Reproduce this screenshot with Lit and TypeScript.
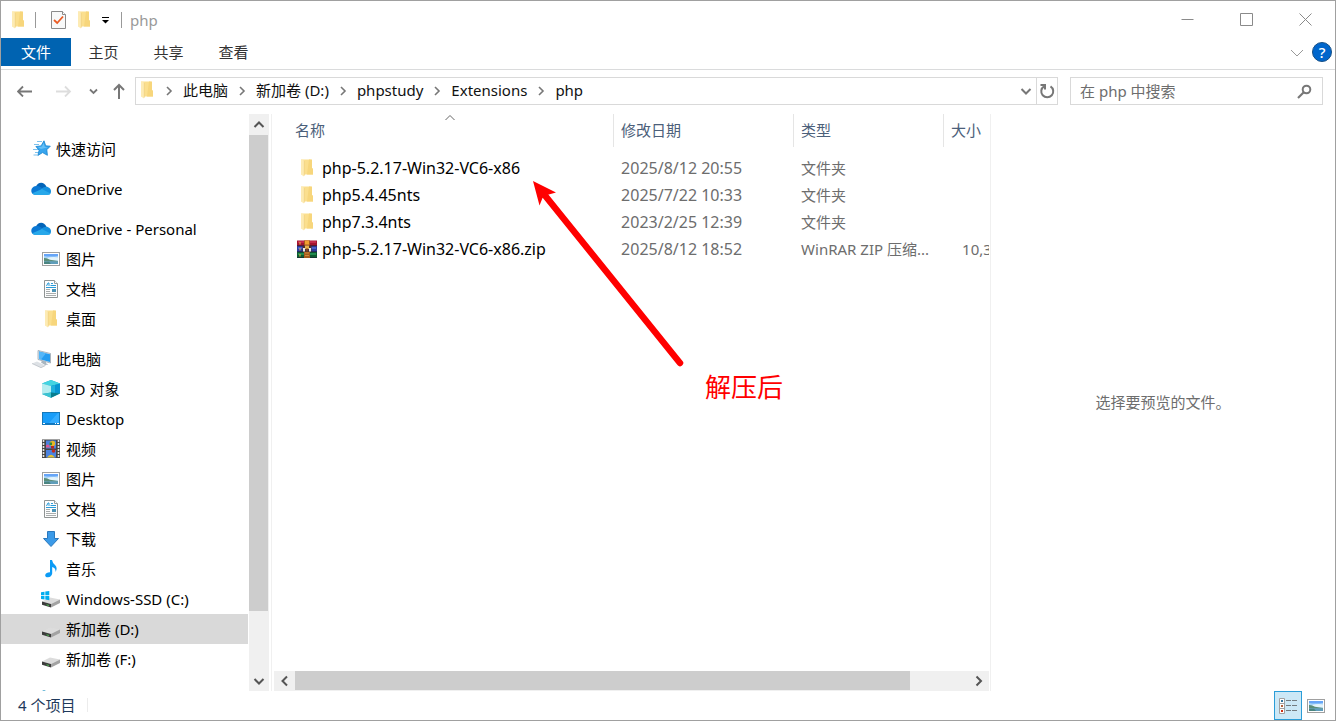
import { LitElement, html, css, svg, nothing } from "lit";
import { customElement, state } from "lit/decorators.js";

const folder = svg`<svg class="icon" width="12" height="18" viewBox="0 0 12 18" aria-hidden="true">
  <path d="M.500 .500H9Q11 .500 11 2V9L12 10V15.500H.500Z" fill="#fbdf8e"/>
  <path d="M8 .500H11V9L12 10V15.500H6Z" fill="#f7d67c"/>
  <path d="M0 0L3.500 2V15.800L3 17.500L0 15.600Z" fill="#fdebb4"/>
  <path d="M3.300 2V16.500" stroke="#edc870" stroke-width=".6"/></svg>`;

const picture = svg`<svg class="icon" width="20" height="20" viewBox="0 0 20 20" aria-hidden="true">
  <rect x="1.500" y="3.500" width="17" height="13" fill="#fff" stroke="#a0a0a0"/>
  <path d="M3 5H17V15H3Z" fill="#a6d4f8"/><path d="M3 5H17V7Q10 8 3 7Z" fill="#67a5f8"/>
  <path d="M6 9Q12 7.500 17 8.500V11.500H7Z" fill="#e3f3fb"/>
  <path d="M3 9Q6 8.800 9 10.800L17 12V12.800H3Z" fill="#5b8d78"/><path d="M3 12.500L11 12.200L17 12.800V15H3Z" fill="#5f9dbb"/><path d="M3 13L8 12.800L10 15H3Z" fill="#4b8580"/></svg>`;

const documentIcon = svg`<svg class="icon" width="20" height="20" viewBox="0 0 20 20" aria-hidden="true">
  <path d="M3.500 1.500H13.500L16.500 4.500V18.500H3.500Z" fill="#fdfdfd" stroke="#8f9494"/>
  <path d="M13.500 1.500V4.500H16.500" fill="#fff" stroke="#9aa0a0"/>
  <path d="M5.500 7L7 4H8V7M10 4.500H12M9.500 6.500H15M5 8.500H15" fill="none" stroke="#2b9bd8"/>
  <path d="M5 10.500H9M5 12.500H9M5 14.500H15M5 16.500H15" stroke="#a8acac"/><rect x="11" y="10" width="4" height="3" fill="#4a93b5"/></svg>`;

const cloud = svg`<svg class="icon" width="20" height="20" viewBox="0 0 20 20" aria-hidden="true">
  <path d="M5 7.500C6.500 3.200 13 2 15.500 7.800L11.500 11Z" fill="#0364b8"/>
  <path d="M5 7C8 6.500 9 7.800 14 11L3 15.500C-1.200 14-.5 7.500 5 7Z" fill="#0a78d4"/>
  <path d="M15 7.800C20.500 7.800 21.500 14.500 17.800 15.500L9.500 10.500Q12 8 15 7.800Z" fill="#1490df"/>
  <path d="M3 15.800Q1.500 15 1.300 14.300L11 9.900L19.500 14.400Q18.500 16 16.500 16H4Q3.400 16 3 15.800Z" fill="#28a8ea"/></svg>`;

const star = svg`<svg class="icon" width="20" height="20" viewBox="0 0 20 20" aria-hidden="true">
  <path d="M13 1.800L14.700 6.800L19.300 7.200L15.800 10.700L16.400 16.300L11.600 13.600L6.800 16.500L8.100 11.200L4.900 7.500L10.100 6.900Z" fill="#37a5ee" stroke="#1583ce" stroke-width=".8"/>
  <path d="M12.500 4L13.700 7.800L17 8.200L10 10L7 8.200L11 7.500Z" fill="#65c0f7"/>
  <path d="M6 2.500H11M3 5.500H8M2 10.500H7M4 13.500H7M2.500 16H6" stroke="#5ab1e8" stroke-width=".8"/></svg>`;

const computer = svg`<svg class="icon" width="20" height="20" viewBox="0 0 20 20" aria-hidden="true">
  <path d="M7 1.500L19.500 4.500V14L7 10.500Z" fill="#dce6ee" stroke="#8f9ba6" stroke-width=".7"/>
  <path d="M8 2.500L19 5.200V13L8 9.900Z" fill="#259cf0"/><path d="M8 2.500L15 4.200L10 10.400L8 9.900Z" fill="#54b6f8"/>
  <path d="M11 11.500L15 12.600V14.200L17.500 15.500L14 16L10 13.500Z" fill="#a9b5bf"/>
  <path d="M1 14.500L6 12.500L14.500 16.500L10 18.700Z" fill="#dde1e5"/><path d="M1 14.500L10 18.700L14.500 16.500" fill="none" stroke="#b4bac1" stroke-width=".7"/></svg>`;

const cube = svg`<svg class="icon" width="20" height="20" viewBox="0 0 20 20" aria-hidden="true">
  <path d="M10 1L19 4.500V14.500L10 18.800L1 15V4.500Z" fill="#19a5c2"/>
  <path d="M1 4.500L10 1L19 4.500L10 7Z" fill="#43d4e1"/><path d="M1 4.500L10 7V13.500L1 15Z" fill="#b5edf0"/>
  <path d="M10 7L19 4.500V14.500L10 13.500Z" fill="#0795d2"/><path d="M10 7L14 6V14L10 13.500Z" fill="#20b0dc"/>
  <path d="M1 15L10 13.500V18.800Z" fill="#3bc3d1"/><path d="M10 13.500L19 14.500L10 18.800Z" fill="#087d8e"/></svg>`;

const desktop = svg`<svg class="icon" width="20" height="20" viewBox="0 0 20 20" aria-hidden="true">
  <rect x="1.500" y="3.500" width="17" height="12" fill="#189df9" stroke="#1478ba"/><path d="M8 14L17 4H18V14Z" fill="#35adff"/>
  <path d="M2 14.500H18" stroke="#0c78c4"/><path d="M2 14.500H4M14 14.500H15M16 14.500H18" stroke="#fff"/></svg>`;

const film = svg`<svg class="icon" width="20" height="20" viewBox="0 0 20 20" aria-hidden="true">
  <path d="M1 .500H19V19H1Z" fill="#454545"/><path d="M2.500 1V19M17.500 1V19" stroke="#e4e4e4" stroke-width="1.600" stroke-dasharray="2 1"/>
  <path d="M5 1.500H15V9.500H5ZM5 11H15V18.500H5Z" fill="#4b82df"/>
  <circle cx="11.500" cy="4.500" r="2.700" fill="#e7b525"/><path d="M8.500 3.500H11V6H8.500Z" fill="#2c8a3e"/><path d="M5 6.500Q8 4 9 8.500H5Z" fill="#df5690"/>
  <path d="M10 7H13V9.500H10Z" fill="#b82920"/><circle cx="12.500" cy="12" r="1.800" fill="#c42a20"/><path d="M6 18.500Q10 13 14 18.500Z" fill="#e6c22e"/></svg>`;

const download = svg`<svg class="icon" width="20" height="20" viewBox="0 0 20 20" aria-hidden="true">
  <path d="M6.500 2.500H13.500V9.500H17.500L10 17.500L2.500 9.500H6.500Z" fill="#3b9ae8" stroke="#2a78bd"/></svg>`;

const music = svg`<svg class="icon" width="20" height="20" viewBox="0 0 20 20" aria-hidden="true">
  <path d="M9 1H11Q11.500 4 14 6Q17 9 14.500 13Q15 9 11.200 8V14.500Q10.500 18 7 18.300Q4 18.300 4.200 16Q5 13.300 9 13.300Z" fill="#0b9bf5"/></svg>`;

const driveShape = svg`<path d="M1 12.500L9 8.500L19 10.500L10 15Z" fill="#dcdcdc"/><path d="M1 12.500L10 15V18.500L1 15.800Z" fill="#3c3c3c"/>
  <path d="M10 15L19 10.500V14L10 18.500Z" fill="#a3a3a3"/><path d="M5.500 15.300L8 16V17L5.500 16.300Z" fill="#47b84b"/>`;
const drive = svg`<svg class="icon" width="20" height="20" viewBox="0 0 20 20" aria-hidden="true">${driveShape}</svg>`;
const systemDrive = svg`<svg class="icon" width="20" height="20" viewBox="0 0 20 20" aria-hidden="true">${driveShape}
  <path d="M0 3.300L3.500 2.800V6.200H0ZM4.300 2.600L8.300 2V6.200H4.300ZM0 7H3.500V10.500L0 10ZM4.300 7H8.300V11.200L4.300 10.600Z" fill="#00adef"/></svg>`;

const archive = svg`<svg class="icon" width="20" height="18" viewBox="0 0 20 18" aria-hidden="true">
  <path d="M0 .500H20V6H0Z" fill="#a3152f"/><path d="M1 1H19V3H1Z" fill="#c32a4a"/>
  <path d="M0 6H20V12H0Z" fill="#2c3c9c"/><path d="M1 7H19V9H1Z" fill="#4a5fc8"/>
  <path d="M0 12H20V18H0Z" fill="#0c5a30"/><path d="M1 13H19V15H1Z" fill="#1f8a4e"/>
  <path d="M0 5.700H20M0 11.700H20M0 17.700H20" stroke="#201c30" stroke-width=".7"/>
  <path d="M3 2V4.500M3 8V10.500M3 14V16.500" stroke="#e9bd45"/>
  <path d="M7 .500H13V5.500H7ZM7 12H13V18H7Z" fill="#a35a1c"/><path d="M8 .500H12V4.500H8Z" fill="#f0a030"/>
  <path d="M5.500 6H14.500V12H5.500Z" fill="#4a3230"/><path d="M8 5.500H12V9H8Z" fill="#e6b24c"/>
  <path d="M6 8H8V11.500H6ZM12 8H14V11.500H12Z" fill="#e8e8ee"/><path d="M9 8.500H11V11.500H9Z" fill="#7b4020"/>
  <path d="M8 13H12M8 15.500H12" stroke="#cf8a3a"/></svg>`;

const properties = svg`<svg class="icon" width="20" height="20" viewBox="0 0 20 20" aria-hidden="true">
  <path d="M4.500 1.500H15.500L18.500 4.500V18.500H4.500Z" fill="#f8f9f9" stroke="#8b8b8b"/><path d="M15.500 1.500V4.500H18.500" fill="#fff" stroke="#8b8b8b"/>
  <path d="M7 10L10.200 13L16 6.500" fill="none" stroke="#ea5b24" stroke-width="1.800"/></svg>`;

const details = svg`<svg class="icon" width="20" height="20" viewBox="0 0 20 20" aria-hidden="true">
  <path d="M1.500 2.500H6.500V17.500H1.500ZM1.500 7.500H6.500M1.500 12.500H6.500" fill="#fff" stroke="#a0a0a0"/>
  <path d="M3 4H5V6H3Z" fill="#36759d"/><path d="M3 9H5V11H3Z" fill="#b5623c"/><path d="M3 14H5V16H3Z" fill="#d03014"/>
  <path d="M8 4.500H13M14 4.500H19M8 9.500H13M14 9.500H19M8 14.500H13M14 14.500H19" stroke="#737b80"/></svg>`;

/** Chevron glyph, rotated through its path rather than by CSS. */
const chevrons: Record<string, string> = {
  down: "M3.500 6L8 10.500L12.500 6",
  up: "M3.500 10L8 5.500L12.500 10",
  left: "M10 3.500L5.500 8L10 12.500",
  right: "M5.500 3.500L10 8L5.500 12.500",
};
const chevron = (dir: string, cls = "") => svg`<svg class="icon ${cls}" width="16" height="16" viewBox="0 0 16 16" aria-hidden="true">
  <path d=${chevrons[dir]} fill="none" stroke="currentColor"/></svg>`;

interface Place { id: string; label: string; icon: unknown; child?: boolean; gap?: boolean }
const places: Place[] = [
  { id: "quick", label: "快速访问", icon: star },
  { id: "od", label: "OneDrive", icon: cloud, gap: true },
  { id: "odp", label: "OneDrive - Personal", icon: cloud, gap: true },
  { id: "odpic", label: "图片", icon: picture, child: true },
  { id: "oddoc", label: "文档", icon: documentIcon, child: true },
  { id: "oddesk", label: "桌面", icon: folder, child: true },
  { id: "pc", label: "此电脑", icon: computer, gap: true },
  { id: "3d", label: "3D 对象", icon: cube, child: true },
  { id: "desktop", label: "Desktop", icon: desktop, child: true },
  { id: "video", label: "视频", icon: film, child: true },
  { id: "pic", label: "图片", icon: picture, child: true },
  { id: "doc", label: "文档", icon: documentIcon, child: true },
  { id: "down", label: "下载", icon: download, child: true },
  { id: "music", label: "音乐", icon: music, child: true },
  { id: "c", label: "Windows-SSD (C:)", icon: systemDrive, child: true },
  { id: "d", label: "新加卷 (D:)", icon: drive, child: true },
  { id: "f", label: "新加卷 (F:)", icon: drive, child: true },
];

const files = [
  { name: "php-5.2.17-Win32-VC6-x86", date: "2025/8/12 20:55", type: "文件夹", size: "", icon: folder },
  { name: "php5.4.45nts", date: "2025/7/22 10:33", type: "文件夹", size: "", icon: folder },
  { name: "php7.3.4nts", date: "2023/2/25 12:39", type: "文件夹", size: "", icon: folder },
  { name: "php-5.2.17-Win32-VC6-x86.zip", date: "2025/8/12 18:52", type: "WinRAR ZIP 压缩...", size: "10,3", icon: archive },
];

@customElement("app-root")
export class AppRoot extends LitElement {
  @state() private selected = "d";

  static styles = css`
    :host { display: block; height: 100vh; font: 15px/20px "Noto Sans", "Noto Sans CJK SC", sans-serif; color: #000; }
    * { box-sizing: border-box; }
    button, input { font: inherit; color: inherit; background: none; border: 0; padding: 0; margin: 0; }
    a { color: inherit; text-decoration: none; }
    .icon { display: block; flex: none; }
    .bold path { stroke-width: 2; }
    .window { height: 100%; display: flex; flex-direction: column; background: #fff; border: 1px solid #a0a0a0; }
    .center { display: flex; align-items: center; justify-content: center; }

    .titlebar { height: 37px; flex: none; display: flex; align-items: center; gap: 11px; padding-left: 11px; }
    .rule { width: 1px; height: 16px; background: #999; }
    .title { display: flex; align-items: center; gap: 8px; color: #999; flex: 1; }
    .controls { display: flex; align-self: stretch; color: #8a8a8a; }
    .controls button { width: 59px; }

    .ribbon { flex: none; display: flex; align-items: center; height: 32px; padding-bottom: 3px; border-bottom: 1px solid #dadbdc; color: #333; }
    .tab { width: 65px; height: 28px; }
    .tab.file { width: 70px; background: #0063b1; color: #fff; }
    .ribbon-end { margin-left: auto; display: flex; align-items: center; gap: 8px; padding-right: 3px; color: #999; }
    .help { width: 20px; height: 20px; border-radius: 50%; background: #0066cc; border: 1px solid #164f85; color: #fff; font-weight: 500; line-height: 18px; }

    .addressbar { flex: none; display: flex; align-items: center; padding: 7px 12px 9px 4px; color: #777; }
    .addressbar .nav { width: 39px; height: 28px; }
    .addressbar .nav.recent { width: 21px; }
    .addressbar .nav.parent { width: 31px; padding-right: 2px; }
    .addressbar .nav.disabled { color: #ddd; }
    .path { flex: 1; min-width: 0; display: flex; height: 28px; border: 1px solid #d9d9d9; margin-right: 12px; }
    .crumbs { flex: 1; min-width: 0; overflow: hidden; display: flex; align-items: center; padding: 0 0 2px 5px; color: #111; white-space: nowrap; }
    .sep { width: 28px; padding-top: 2px; color: #777; }
    .crumbs > .icon { margin-right: 2px; }
    .path button { width: 21px; }
    .path .refresh { border-left: 1px solid #d9d9d9; }
    .search { width: 253px; height: 28px; border: 1px solid #d9d9d9; display: flex; align-items: center; padding: 0 9px; }
    .search input { flex: 1; min-width: 0; outline: 0; }
    .search input::placeholder { color: #6d6d6d; opacity: 1; }

    .main { flex: 1; min-height: 0; display: grid; grid-template-columns: 271px minmax(0, 23fr) minmax(0, 11fr); }
    .side { display: flex; min-height: 0; border-right: 1px solid #f0f0f0; padding-right: 2px; }
    .tree { flex: 1; min-width: 0; overflow: hidden; padding-top: 20px; margin-right: 1px; }
    .place { display: flex; align-items: center; gap: 5px; height: 30px; padding-left: 30px; white-space: nowrap; }
    .place.child { padding-left: 40px; }
    .place.gap { margin-top: 10px; }
    .place.selected { background: #d9d9d9; }
    .slot { width: 20px; }
    .place .slot { padding-right: 1px; }
    .rows .slot { padding-right: 1px; }
    .more { height: 10px; margin-top: 16px; padding-left: 40px; }
    .scroll { background: #f0f0f0; display: flex; color: #555; }
    .scroll.v { width: 20px; flex-direction: column; }
    .scroll.h { height: 20px; margin: 0 1px 0 2px; }
    .scroll.v button { height: 21px; padding-right: 1px; }
    .scroll.h button { width: 21px; padding-bottom: 1px; }
    .track { flex: 1; display: flex; }
    .v .track { flex-direction: column; padding-right: 1px; }
    .h .track { padding-bottom: 1px; }
    .thumb { background: #cdcdcd; }
    .v .thumb { flex: 0 0 89%; }
    .h .thumb { flex: 0 0 91.4%; }

    .list { position: relative; display: flex; flex-direction: column; min-height: 0; border-right: 1px solid #f0f0f0; }
    .rows { flex: 1; min-height: 0; overflow: hidden; padding-right: 1px; }
    table { width: 100%; table-layout: fixed; border-collapse: separate; border-spacing: 0; }
    .c-date { width: 180px; } .c-type { width: 150px; } .c-size { width: 46px; }
    th { position: relative; height: 33px; padding: 0 0 2px 7px; font-weight: 400; text-align: left; color: #4c607a; border-left: 1px solid #e5e5e5; white-space: nowrap; }
    th:first-child { border-left: 0; padding-left: 23px; }
    .sort { position: absolute; top: -4px; left: 50%; margin-left: -1px; color: #666; }
    .spacer td { height: 7px; }
    td { height: 27px; padding: 0 0 0 8px; color: #6d6d6d; white-space: nowrap; overflow: hidden; }
    td.name { padding-left: 25px; color: #000; }
    td.name, td.date { font-size: 16px; }
    td.size { padding-left: 19px; }
    .file-name { display: flex; align-items: center; gap: 5px; }
    .arrow { position: absolute; left: 256px; top: 62px; }
    .note { position: absolute; left: 433px; top: 255px; font-size: 26px; line-height: 36px; color: #f00; white-space: nowrap; }
    .preview { color: #6d6d6d; padding-bottom: 2px; }

    .status { flex: none; display: flex; align-items: center; height: 29px; color: #1e395b; padding-left: 17px; }
    .count { padding-right: 12px; margin-bottom: 2px; border-right: 1px solid #ececec; line-height: 14px; }
    .views { margin-left: auto; display: flex; padding-right: 5px; }
    .views button { width: 28px; height: 29px; border: 1px solid transparent; }
    .views .on { background: #cce8f6; border-color: #2a9dd8; }
  `;

  private crumb(label: string) {
    return html`<span class="sep center">${svg`<svg class="icon" width="16" height="16" viewBox="0 0 16 16" aria-hidden="true"><path d="M6 4L10 8L6 12" fill="none" stroke="currentColor" stroke-width="1.600"/></svg>`}</span><a href="#">${label}</a>`;
  }

  private scrollbar(dir: "v" | "h") {
    const [a, b] = dir === "v" ? ["up", "down"] : ["left", "right"];
    return html`<div class="scroll ${dir}">
      <button class="center" aria-label=${a}>${chevron(a, "bold")}</button>
      <div class="track"><div class="thumb"></div></div>
      <button class="center" aria-label=${b}>${chevron(b, "bold")}</button>
    </div>`;
  }

  render() {
    return html`<div class="window">
      <header class="titlebar">
        ${folder}<span class="rule"></span>${properties}${folder}
        ${svg`<svg class="icon" width="9" height="8" viewBox="0 0 9 8" aria-hidden="true"><path d="M1 1.500H8" stroke="#000"/><path d="M1 4H8L4.500 7.500Z"/></svg>`}
        <div class="title"><span class="rule"></span>php</div>
        <div class="controls">
          <button class="center" aria-label="最小化">${svg`<svg class="icon" width="13" height="13" viewBox="0 0 13 13"><path d="M.500 6.500H12.500" stroke="currentColor"/></svg>`}</button>
          <button class="center" aria-label="最大化">${svg`<svg class="icon" width="13" height="13" viewBox="0 0 13 13"><path d="M.500 .500H12.500V12.500H.500Z" fill="none" stroke="currentColor"/></svg>`}</button>
          <button class="center" aria-label="关闭">${svg`<svg class="icon" width="13" height="13" viewBox="0 0 13 13"><path d="M.500 .500L12.500 12.500M12.500 .500L.500 12.500" stroke="currentColor"/></svg>`}</button>
        </div>
      </header>

      <div class="ribbon">
        <button class="tab file">文件</button><button class="tab">主页</button><button class="tab">共享</button><button class="tab">查看</button>
        <div class="ribbon-end">
          <button aria-label="展开功能区">${svg`<svg class="icon" width="14" height="14" viewBox="0 0 14 14"><path d="M1 5L7 11L13 5" fill="none" stroke="currentColor"/></svg>`}</button>
          <button class="help" aria-label="帮助">?</button>
        </div>
      </div>

      <div class="addressbar">
        <button class="nav center" aria-label="后退">${svg`<svg class="icon" width="16" height="12" viewBox="0 0 16 12"><path d="M1 6.500H15M6 1.500L1 6.500L6 11.500" fill="none" stroke="currentColor" stroke-width="1.800"/></svg>`}</button>
        <button class="nav center disabled" aria-label="前进">${svg`<svg class="icon" width="16" height="12" viewBox="0 0 16 12"><path d="M0 6.500H14M9 1.500L14 6.500L9 11.500" fill="none" stroke="currentColor" stroke-width="1.800"/></svg>`}</button>
        <button class="nav recent center" aria-label="最近位置">${svg`<svg class="icon" width="10" height="8" viewBox="0 0 10 8"><path d="M1 2.500L4.500 6L8 2.500" fill="none" stroke="currentColor" stroke-width="1.800"/></svg>`}</button>
        <button class="nav parent center" aria-label="上一级">${svg`<svg class="icon" width="12" height="16" viewBox="0 0 12 16"><path d="M6 16V2M1 7L6 2L11 7" fill="none" stroke="currentColor" stroke-width="2"/></svg>`}</button>
        <div class="path">
          <nav class="crumbs" aria-label="路径">
            ${folder}${["此电脑", "新加卷 (D:)", "phpstudy", "Extensions", "php"].map((c) => this.crumb(c))}
          </nav>
          <button class="center" aria-label="历史记录">${chevron("down", "bold")}</button>
          <button class="refresh center" aria-label="刷新">${svg`<svg class="icon" width="16" height="16" viewBox="0 0 16 16"><path d="M11.500 3.300A6 6 0 1 1 5 3.300" fill="none" stroke="currentColor" stroke-width="2"/><path d="M1.500 2H6V6.500" fill="none" stroke="currentColor" stroke-width="2"/></svg>`}</button>
        </div>
        <label class="search">
          <input type="text" placeholder="在 php 中搜索" aria-label="在 php 中搜索" />
          ${svg`<svg class="icon" width="16" height="16" viewBox="0 0 16 16" aria-hidden="true"><circle cx="9.500" cy="6.500" r="3.800" fill="none" stroke="currentColor" stroke-width="2"/><path d="M7 9L1 15" stroke="currentColor" stroke-width="2.200"/></svg>`}
        </label>
      </div>

      <div class="main">
        <aside class="side">
          <nav class="tree" aria-label="导航窗格">
            ${places.map((p) => html`<a href="#" class="place ${p.child ? "child" : ""} ${p.gap ? "gap" : ""} ${p.id === this.selected ? "selected" : ""}"
              @click=${(e: Event) => { e.preventDefault(); this.selected = p.id; }}>
              <span class="slot center">${p.icon}</span>${p.label}</a>`)}
            <div class="more">${svg`<svg class="icon" width="6" height="4" viewBox="0 0 6 4" aria-hidden="true"><path d="M0 1.500L3 0L6 1.500Z" fill="#49a9cf"/></svg>`}</div>
          </nav>
          ${this.scrollbar("v")}
        </aside>

        <section class="list">
          <div class="rows">
            <table>
              <colgroup><col /><col class="c-date" /><col class="c-type" /><col class="c-size" /></colgroup>
              <thead><tr>
                <th>名称${svg`<svg class="sort" width="16" height="16" viewBox="0 0 16 16" aria-hidden="true"><path d="M3.500 10L8 5.500L12.500 10" fill="none" stroke="currentColor"/></svg>`}</th>
                <th>修改日期</th><th>类型</th><th>大小</th>
              </tr></thead>
              <tbody>
                <tr class="spacer" aria-hidden="true"><td colspan="4"></td></tr>
                ${files.map((f) => html`<tr>
                  <td class="name"><span class="file-name"><span class="slot center">${f.icon}</span>${f.name}</span></td>
                  <td class="date">${f.date}</td><td>${f.type}</td><td class="size">${f.size || nothing}</td>
                </tr>`)}
              </tbody>
            </table>
          </div>
          ${this.scrollbar("h")}
          <svg class="arrow" width="160" height="196" viewBox="0 0 160 196" aria-hidden="true">
            <path d="M15 17L152 187" stroke="#f00" stroke-width="6.500" stroke-linecap="round"/>
            <path d="M5 5L28 16.500L19 19L14.500 22L11.500 29.500Z" fill="#f00"/>
          </svg>
          <div class="note">解压后</div>
        </section>

        <section class="preview center">选择要预览的文件。</section>
      </div>

      <footer class="status">
        <span class="count">4 个项目</span>
        <div class="views">
          <button class="on center" aria-label="详细信息">${details}</button>
          <button class="center" aria-label="大图标">${picture}</button>
        </div>
      </footer>
    </div>`;
  }
}
